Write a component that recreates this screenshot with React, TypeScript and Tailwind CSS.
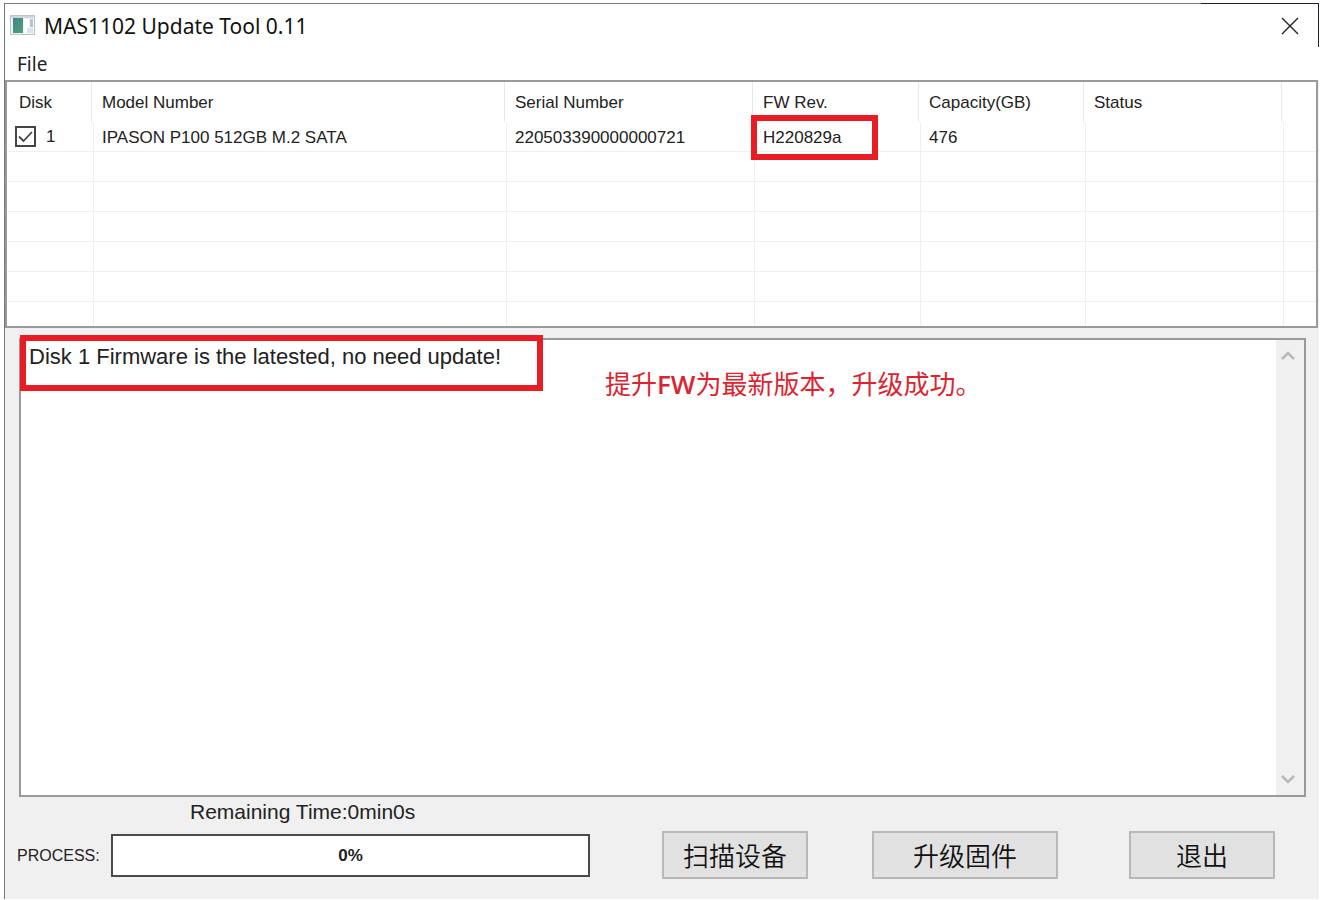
import React from "react";

const columns = [
  { name: "Disk", width: "w-[87px]", pad: "pl-[12px]" },
  { name: "Model Number", width: "w-[413px]", pad: "pl-[8px]" },
  { name: "Serial Number", width: "w-[248px]", pad: "pl-[8px]" },
  { name: "FW Rev.", width: "w-[166px]", pad: "pl-[8px]" },
  { name: "Capacity(GB)", width: "w-[165px]", pad: "pl-[8px]" },
  { name: "Status", width: "w-[198px]", pad: "pl-[8px]" },
];

const emptyRows = [1, 2, 3, 4, 5, 6];

const cell = "h-[30px] border-r border-b border-[#efefef] p-0";
const textCell = "h-[30px] border-r border-b border-[#efefef] p-0 pl-[8px] pt-[2px]";
const lastCell = "h-[30px] border-b border-[#efefef] p-0";

function AppIcon() {
  return (
    <svg width="26" height="22" viewBox="0 0 26 22" aria-hidden="true">
      <defs>
        <linearGradient id="pane" x1="0" y1="0" x2="1" y2="1">
          <stop offset="0" stopColor="#43838f" />
          <stop offset="1" stopColor="#4aa574" />
        </linearGradient>
      </defs>
      <rect x="0.5" y="0.5" width="24" height="19" fill="#f1f4f5" stroke="#bcc4c8" />
      <rect x="1" y="1" width="23" height="2" fill="#ccd6da" />
      <rect x="3" y="3" width="10" height="15" fill="url(#pane)" />
      <rect x="14" y="4" width="5" height="14" fill="#ffffff" />
      <rect x="20" y="4" width="3" height="8" fill="#b4c6cf" />
      <rect x="17" y="13" width="6" height="5" fill="#dde3e7" />
    </svg>
  );
}

function TitleBar() {
  return (
    <header className="relative flex h-[43px] items-center justify-between border-r border-[#1c1c2a] pl-[5px] pr-[19px]">
      <span className="absolute -right-px -top-px h-px w-[118px] bg-[#1c1c2a]" />
      <div className="flex items-center gap-[8px]">
        <AppIcon />
        <h1 className="font-['Noto_Sans','Noto_Sans_CJK_SC',sans-serif] text-[21px] leading-[28px] text-[#111]">
          MAS1102 Update Tool 0.11
        </h1>
      </div>
      <button type="button" aria-label="Close" className="flex size-[18px] items-center justify-center">
        <svg width="18" height="18" viewBox="0 0 18 18" aria-hidden="true">
          <path d="M1 1 L17 17 M17 1 L1 17" stroke="#222" strokeWidth="1.4" fill="none" />
        </svg>
      </button>
    </header>
  );
}

function DiskTable() {
  return (
    <div className="mr-[1px] h-[248px] overflow-hidden border-2 border-[#9a9a9a] bg-white">
      <table className="w-full table-fixed border-separate border-spacing-0 text-left text-[17px] leading-[20px]">
        <colgroup>
          {columns.map((c) => (
            <col key={c.name} className={c.width} />
          ))}
          <col />
        </colgroup>
        <thead>
          <tr>
            {columns.map((c) => (
              <th key={c.name} scope="col" className="p-0 pr-[2px] font-normal">
                <div className={`flex h-[40px] items-center border-r border-[#e8e8e8] pt-[2px] ${c.pad}`}>{c.name}</div>
              </th>
            ))}
            <td />
          </tr>
        </thead>
        <tbody>
          <tr>
            <td className={cell}>
              <label className="flex items-center gap-[10px] pl-[8px]">
                <span className="relative flex size-[21px]">
                  <input
                    type="checkbox"
                    defaultChecked
                    className="peer size-[21px] appearance-none border-2 border-[#444] bg-white"
                  />
                  <svg
                    width="21"
                    height="21"
                    viewBox="0 0 21 21"
                    aria-hidden="true"
                    className="pointer-events-none absolute inset-0 hidden peer-checked:block"
                  >
                    <path d="M4 10.5 L8.5 15 L17 6" stroke="#444" strokeWidth="1.8" fill="none" />
                  </svg>
                </span>
                1
              </label>
            </td>
            <td className={textCell}>IPASON P100 512GB M.2 SATA</td>
            <td className={textCell}>220503390000000721</td>
            <td className={`relative ${textCell}`}>
              H220829a
              <span className="pointer-events-none absolute -left-[4px] -top-[7px] h-[45px] w-[127px] border-6 border-[#e81c24]" />
            </td>
            <td className={textCell}>476</td>
            <td className={cell} />
            <td className={lastCell} />
          </tr>
          {emptyRows.map((r) => (
            <tr key={r}>
              {columns.map((c) => (
                <td key={c.name} className={cell} />
              ))}
              <td className={lastCell} />
            </tr>
          ))}
        </tbody>
      </table>
    </div>
  );
}

function Chevron({ d }: { d: string }) {
  return (
    <svg width="14" height="10" viewBox="0 0 14 10" aria-hidden="true">
      <path d={d} stroke="#b9b9b9" strokeWidth="2.6" fill="none" />
    </svg>
  );
}

function LogPanel() {
  return (
    <section className="relative ml-[14px] mr-[13px] mt-[10px] flex h-[459px] border-2 border-[#9a9a9a] bg-white">
      <textarea
        readOnly
        aria-label="Log"
        defaultValue="Disk 1 Firmware is the latested, no need update!"
        className="flex-1 resize-none overflow-hidden pl-[8px] pt-[5px] text-[22px] leading-[24px] outline-none"
      />
      <div className="flex w-[28px] flex-col justify-between bg-[#f0f0f0] pr-[4px]">
        <button type="button" aria-label="Scroll up" className="flex h-[32px] items-center justify-center">
          <Chevron d="M1 8 L7 2 L13 8" />
        </button>
        <button type="button" aria-label="Scroll down" className="flex h-[32px] items-center justify-center">
          <Chevron d="M1 2 L7 8 L13 2" />
        </button>
      </div>
      <span className="pointer-events-none absolute -left-[1px] -top-[5px] h-[56px] w-[523px] border-6 border-[#e81c24]" />
      <p className="pointer-events-none absolute left-[584px] top-[27px] font-['Open_Sans','Noto_Sans_CJK_SC',sans-serif] text-[26px] leading-[34px] text-[#dc2430]">
        提升<span className="font-semibold">FW</span>为最新版本，升级成功。
      </p>
    </section>
  );
}

const buttonClass =
  "h-[48px] border-2 border-[#b8b8b8] bg-[#e1e1e1] font-['Noto_Sans_CJK_SC',sans-serif] text-[26px] leading-[38px] font-[350] text-[#111]";

function Footer() {
  return (
    <footer className="flex items-start pl-[12px] pr-[44px]">
      <div className="w-[573px]">
        <p className="pl-[173px] pt-[3px] text-[21px] leading-[24px]">Remaining Time:0min0s</p>
        <div className="flex items-center gap-[8px] pt-[10px]">
          <span id="process-label" className="w-[86px] text-[16px] leading-[20px]">
            PROCESS:
          </span>
          <div
            role="progressbar"
            aria-labelledby="process-label"
            aria-valuenow={0}
            className="flex h-[43px] flex-1 items-center justify-center border-2 border-[#4a4a4a] bg-white text-[17px] leading-[20px] font-semibold"
          >
            0%
          </div>
        </div>
      </div>
      <div className="flex flex-1 pl-[72px] pt-[34px]">
        <button type="button" className={`w-[146px] ${buttonClass}`}>扫描设备</button>
        <button type="button" className={`ml-[64px] w-[186px] ${buttonClass}`}>升级固件</button>
        <button type="button" className={`ml-auto w-[146px] ${buttonClass}`}>退出</button>
      </div>
    </footer>
  );
}

export default function App() {
  return (
    <div className="min-h-screen bg-white pl-[4px] pr-[1px] pt-[3px] font-['Liberation_Sans',sans-serif] text-[#222]">
      <main className="flex min-h-[896px] flex-col border-l border-t border-[#777] bg-[#f0f0f0]">
        <div className="bg-white">
          <TitleBar />
          <nav className="flex h-[33px] items-center pl-[12px] font-['Noto_Sans',sans-serif]">
            <button type="button" className="text-[19px] leading-[24px]">File</button>
          </nav>
        </div>
        <DiskTable />
        <LogPanel />
        <Footer />
      </main>
    </div>
  );
}
